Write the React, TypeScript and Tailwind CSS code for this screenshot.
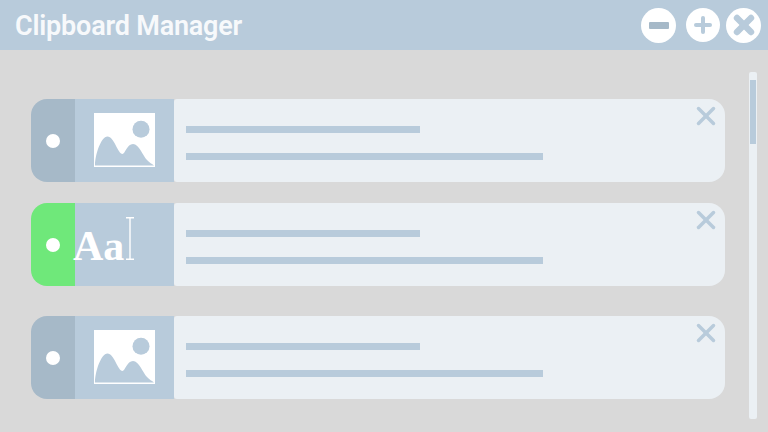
import { Plus, X } from "lucide-react";

function ImageGlyph() {
  return (
    <svg width="61" height="54" viewBox="0 0 61 54" className="-mt-[1px]">
      <rect width="61" height="54" fill="#ffffff" />
      <circle cx="47" cy="16.3" r="8.5" fill="#b8cbdb" />
      <path
        d="M1 52.5 C1 42 7 23.5 13.5 23.5 C20 23.5 24 41 28.5 41 C31 41 33 31 39 31 C45 31 49 43 53 47 C55.5 49.5 58 51 60 52.5 Z"
        fill="#b8cbdb"
      />
    </svg>
  );
}

function TextGlyph() {
  return (
    <div className="flex items-end -ml-[2px] h-[54px]">
      <span className="font-['Liberation_Serif',serif] font-bold text-[42px] leading-[42px] mb-[5px] text-white">
        Aa
      </span>
      <svg width="10" height="43" viewBox="0 0 10 43" className="mb-[12px] ml-[1px]">
        <path d="M1 0.7 H9 M5 0.7 V42.3 M1 42.3 H9" stroke="#ffffff" strokeWidth="1.4" fill="none" />
      </svg>
    </div>
  );
}

function ClipCard({ kind, className }: { kind: "image" | "text"; className?: string }) {
  return (
    <div className={`flex h-[83px] rounded-[16px] overflow-hidden ${className ?? ""}`}>
      <div
        className={`w-[44px] flex items-center justify-center ${
          kind === "text" ? "bg-[#6fe87a]" : "bg-[#a6b9c8]"
        }`}
      >
        <div className="w-[14px] h-[14px] rounded-full bg-white" />
      </div>
      <div className="w-[99px] bg-[#b8cbdb] flex items-center justify-center">
        {kind === "image" ? (
          <ImageGlyph />
        ) : (
          <div className="w-full h-full flex items-center">
            <TextGlyph />
          </div>
        )}
      </div>
      <div className="flex-1 bg-[#ebf0f4] rounded-l-[3px] flex">
        <div className="flex-1 flex flex-col pl-[12px] pt-[27px] gap-[20px]">
          <div className="w-[234px] h-[7px] bg-[#b8cbdb]" />
          <div className="w-[357px] h-[7px] bg-[#b8cbdb]" />
        </div>
        <X size={30} strokeWidth={2.8} className="text-[#b8cbdb] mt-[2px] mr-[4px]" />
      </div>
    </div>
  );
}

export default function App() {
  return (
    <div className="w-[768px] h-[432px] overflow-hidden bg-[#d9d9d9] flex flex-col">
      <header className="h-[50px] bg-[#b8cbdb] flex items-center justify-between pl-[15px] pr-[7px]">
        <h1 className="font-['Roboto',sans-serif] font-semibold text-[27px] tracking-[-0.2px] pt-[3px] text-[#f7f9fb]">
          Clipboard Manager
        </h1>
        <div className="flex items-center">
          <div className="w-[35px] h-[35px] rounded-full bg-white flex items-center justify-center">
            <div className="w-[20px] h-[7px] rounded-[1px] bg-[#a6b9c8]" />
          </div>
          <div className="ml-[10px] w-[34px] h-[34px] rounded-full bg-white flex items-center justify-center">
            <Plus size={24} strokeWidth={4} className="text-[#b8cbdb]" />
          </div>
          <div className="ml-[6px] w-[35px] h-[35px] rounded-full bg-white flex items-center justify-center">
            <X size={28} strokeWidth={5.5} className="text-[#b8cbdb]" />
          </div>
        </div>
      </header>
      <main className="flex-1 flex">
        <div className="w-[694px] ml-[31px] pt-[49px]">
          <ClipCard kind="image" />
          <ClipCard kind="text" className="mt-[21px]" />
          <ClipCard kind="image" className="mt-[30px]" />
        </div>
        <div className="ml-[24px] mt-[22px] w-[8px] h-[347px] rounded-[2px] bg-[#ebf0f4] pt-[8px] px-[1px]">
          <div className="h-[64px] bg-[#b8cbdb]" />
        </div>
      </main>
    </div>
  );
}
